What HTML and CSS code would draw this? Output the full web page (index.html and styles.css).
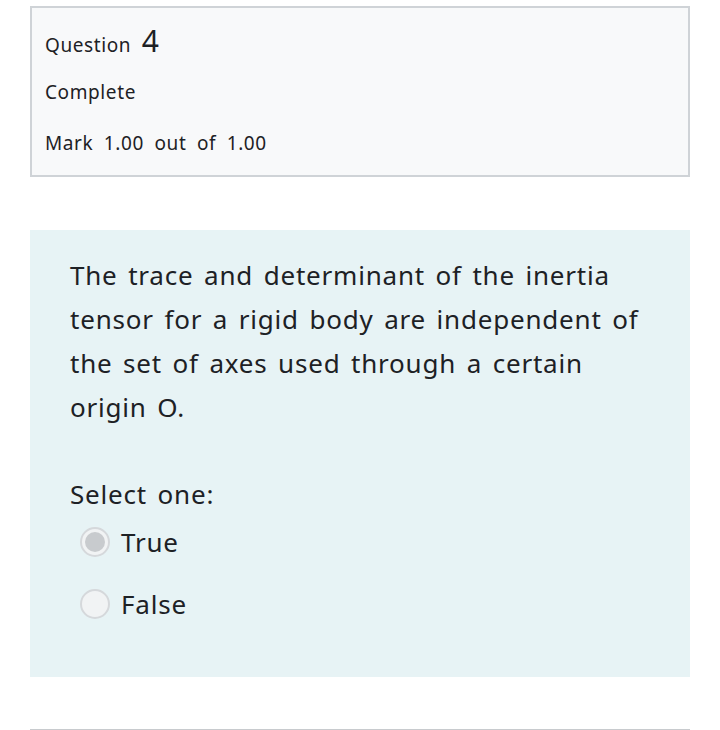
FILE: index.html
```html
<!DOCTYPE html>
<html>
<head>
<meta charset="utf-8">
<link rel="stylesheet" href="styles.css">
</head>
<body>
<div class="page">
  <div class="info">
    <h3 class="qno">Question <span class="num">4</span></h3>
    <div class="state">Complete</div>
    <div class="grade">Mark 1.00 out of 1.00</div>
  </div>
  <div class="formulation">
    <div class="qtext">The trace and determinant of the inertia tensor for a rigid body are independent of the set of axes used through a certain origin O.</div>
    <div class="prompt">Select one:</div>
    <div class="answer">
      <label class="opt"><span class="radio checked"></span><span>True</span></label>
      <label class="opt"><span class="radio"></span><span>False</span></label>
    </div>
  </div>
  <div class="next"></div>
</div>
</body>
</html>
```
FILE: styles.css
```css
html, body {
  margin: 0;
  padding: 0;
  background: #ffffff;
}
body {
  font-family: "Noto Sans", "Liberation Sans", sans-serif;
  color: #1d2125;
}
.page {
  padding: 6px 30px 0 30px;
  display: flex;
  flex-direction: column;
}
.info {
  background: #f8f9fa;
  border: 2px solid #cfd3d7;
  padding: 14px 13px 18px 13px;
  height: 171px;
  box-sizing: border-box;
  display: flex;
  flex-direction: column;
  letter-spacing: 0.6px;
  word-spacing: 5px;
}
.qno {
  margin: 0;
  font-weight: 400;
  font-size: 19px;
  line-height: 38px;
  height: 38px;
}
.num {
  font-size: 30px;
}
.state {
  font-size: 19px;
  line-height: 28px;
  margin-top: 18px;
}
.grade {
  font-size: 19px;
  line-height: 28px;
  margin-top: 23px;
}
.formulation {
  margin-top: 53px;
  background: #e7f3f5;
  height: 447px;
  box-sizing: border-box;
  padding: 23px 40px 0 40px;
  letter-spacing: 0.8px;
  word-spacing: 3px;
}
.qtext {
  font-size: 26px;
  line-height: 44px;
}
.prompt {
  font-size: 26px;
  line-height: 40px;
  margin-top: 45px;
}
.answer {
  display: flex;
  flex-direction: column;
  margin-top: -3px;
}
.opt {
  display: flex;
  align-items: center;
  gap: 11px;
  font-size: 26px;
  height: 62px;
  padding-left: 10px;
}
.radio {
  width: 30px;
  height: 30px;
  border-radius: 50%;
  border: 2px solid #d5d8db;
  background: #f1f3f4;
  box-sizing: border-box;
  display: flex;
  align-items: center;
  justify-content: center;
}
.radio.checked::after {
  content: "";
  width: 20px;
  height: 20px;
  border-radius: 50%;
  background: #c8cbce;
}
.next {
  margin-top: 52px;
  border-top: 1px solid #c8cbce;
  height: 10px;
}
```
